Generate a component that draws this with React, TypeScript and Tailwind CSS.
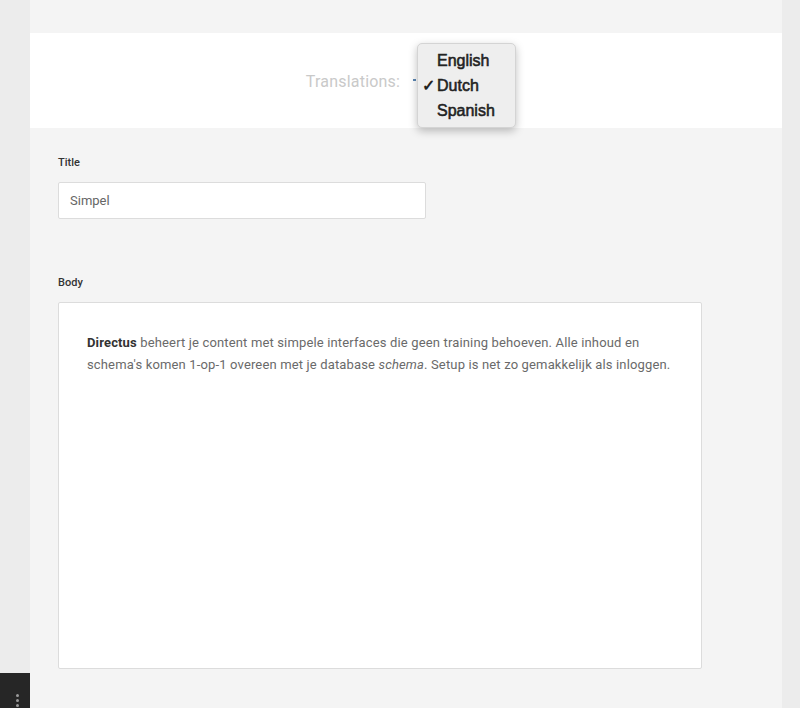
import React from 'react';

const languages = [
  { name: 'English', checked: false },
  { name: 'Dutch', checked: true },
  { name: 'Spanish', checked: false },
];

const App: React.FC = () => {
  return (
    <div className="flex h-[708px] w-[800px] overflow-hidden bg-[#ececec] font-['Roboto',sans-serif]">
      {/* left rail */}
      <div className="flex w-[30px] shrink-0 flex-col justify-end">
        <div className="flex h-[35px] flex-col items-end justify-end gap-[2px] bg-[#262626] pr-[11px] pb-[1px]">
          <span className="h-[3px] w-[3px] rounded-full bg-[#9a9a9a]" />
          <span className="h-[3px] w-[3px] rounded-full bg-[#9a9a9a]" />
          <span className="h-[3px] w-[3px] rounded-full bg-[#9a9a9a]" />
        </div>
      </div>

      {/* main column */}
      <div className="flex w-[752px] shrink-0 flex-col bg-[#f4f4f4] pt-[33px]">
        <div className="relative flex h-[95px] items-center justify-center bg-white pr-[2px]">
          <div className="mr-[88px] flex items-center gap-[13px] pt-[2px]">
            <span className="text-[16px] tracking-[0.2px] text-[#c9c9c9]">Translations:</span>
            <span className="mt-[-4px] h-[2px] w-[3px] bg-[#5b86b3]" />
          </div>

          {/* open select menu */}
          <div className="absolute left-[387px] top-[10px] flex h-[85px] w-[99px] flex-col justify-center rounded-[5px] border border-[#d4d4d4] bg-[#eeeeee] py-[4px] shadow-[0_3px_8px_rgba(0,0,0,0.25)] font-['Liberation_Sans',sans-serif]">
            {languages.map((lang) => (
              <div key={lang.name} className="flex h-[25.5px] items-center text-[16px] leading-none text-[#222]">
                <span className="w-[19px] pl-[4px] text-[16px] font-bold">{lang.checked ? '✓' : ''}</span>
                <span className="[-webkit-text-stroke:0.55px_#222]">{lang.name}</span>
              </div>
            ))}
          </div>
        </div>

        <div className="flex flex-col px-[28px] pt-[28px]">
          <label className="text-[11px] font-medium leading-[13px] text-[#333]">Title</label>
          <div className="mt-[13px] flex h-[37px] w-[368px] items-center rounded-[2px] border border-[#dcdcdc] bg-white px-[11px] text-[13px] text-[#666]">
            Simpel
          </div>

          <label className="mt-[57px] text-[11px] font-medium leading-[13px] text-[#333]">Body</label>
          <div className="mt-[13px] h-[367px] w-[644px] rounded-[2px] border border-[#dcdcdc] bg-white px-[28px] pt-[29px]">
            <p className="text-[13px] leading-[22px] tracking-[0.15px] text-[#6a6a6a]">
              <strong className="font-bold text-[#333]">Directus</strong> beheert je content met simpele interfaces die geen training behoeven. Alle inhoud en schema's komen 1-op-1 overeen met je database <em>schema</em>. Setup is net zo gemakkelijk als inloggen.
            </p>
          </div>
        </div>
      </div>

      {/* right rail */}
      <div className="w-[18px] shrink-0" />
    </div>
  );
};

export default App;
